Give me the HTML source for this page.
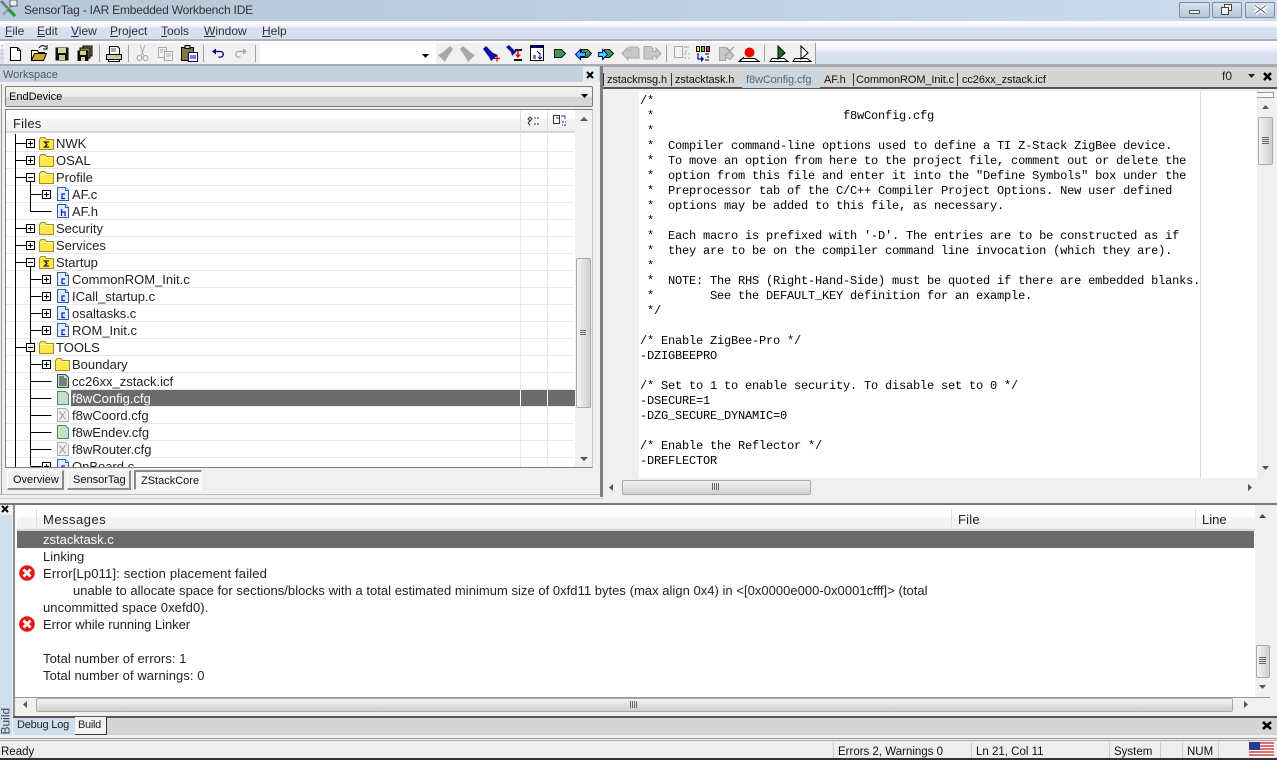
<!DOCTYPE html>
<html><head><meta charset="utf-8"><title>SensorTag - IAR Embedded Workbench IDE</title>
<style>
html,body{margin:0;padding:0;width:1277px;height:760px;overflow:hidden;background:#f0f0f0;font-family:"Liberation Sans",sans-serif;font-size:13px;color:#000}
div,span,svg{position:absolute;box-sizing:border-box}
u{text-decoration:underline}
.t{white-space:pre;line-height:17px}
.m{position:absolute;top:23px;color:#333;font-size:12px;line-height:16px;white-space:pre}
.ln{left:0;width:620px;height:15px;line-height:15px;font-family:"Liberation Mono",monospace;font-size:12px;letter-spacing:-.2px;white-space:pre}
.btn{background:linear-gradient(#f2f2f2,#d8d8d8);border:1px solid #aaa;border-radius:2px}
.r{position:absolute;left:0;height:1px;background:#e8e8e8;width:568px}
.tb{position:absolute;height:17px;line-height:17px;white-space:pre;font-size:11px;color:#111}
.tab{position:absolute;height:20px;top:72px;font-size:11px;letter-spacing:-.1px;line-height:16px;white-space:pre;color:#111}
.sb{position:absolute;top:745px;font-size:11.500px;line-height:14px;color:#111;white-space:pre}
.sp{position:absolute;top:742px;height:16px;width:1px;background:#cfcbc8}
.wt{position:absolute;top:470px;height:20px;background:#f0f0f0;border:1px solid #fff;border-right:2px solid #8a8a8a;border-bottom:2px solid #8a8a8a}
</style></head>
<body>
<svg width="0" height="0" style="left:0;top:0">
<defs>
<symbol id="plus" viewBox="0 0 9 9"><rect x=".5" y=".5" width="8" height="8" fill="#fff" stroke="#000"/><path d="M2 4.500h5M4.500 2v5" stroke="#000"/></symbol>
<symbol id="minus" viewBox="0 0 9 9"><rect x=".5" y=".5" width="8" height="8" fill="#fff" stroke="#000"/><path d="M2 4.500h5" stroke="#000"/></symbol>
<symbol id="folder" viewBox="0 0 15 13"><path d="M.5 12.500V2.500L2 .5h4l1.500 2h7v10z" fill="#ffe84a" stroke="#a98a20"/><path d="M1.500 3.500h12" stroke="#fff8c0"/></symbol>
<symbol id="sfolder" viewBox="0 0 15 13"><path d="M.5 12.500V2.500L2 .5h4l1.500 2h7v10z" fill="#ffe84a" stroke="#a98a20"/><path d="M10 5H5.500L8 7.500 5.500 10H10" fill="none" stroke="#222" stroke-width="1.300"/></symbol>
<symbol id="cfile" viewBox="0 0 12 14"><path d="M.5.5h8l3 3v10H.5z" fill="#dfeefa" stroke="#2d5f9c"/><path d="M8.500.5v3h3" fill="#fff" stroke="#2d5f9c"/><path d="M8 7H5v4.500h3" fill="none" stroke="#1414e0" stroke-width="1.200"/></symbol>
<symbol id="hfile" viewBox="0 0 12 14"><path d="M.5.5h8l3 3v10H.5z" fill="#dfeefa" stroke="#2d5f9c"/><path d="M8.500.5v3h3" fill="#fff" stroke="#2d5f9c"/><path d="M4.500 5v7M4.500 8H8v4" fill="none" stroke="#1414e0" stroke-width="1.200"/></symbol>
<symbol id="tfile" viewBox="0 0 12 14"><path d="M.5.5h8l3 3v10H.5z" fill="#c5e0c8" stroke="#345"/><path d="M2 3h5M2 5h8M2 7h8M2 9h8M2 11h8" stroke="#222"/></symbol>
<symbol id="gfile" viewBox="0 0 12 14"><path d="M.5.5h8l3 3v10H.5z" fill="#c4e0c6" stroke="#4b8a68"/></symbol>
<symbol id="xfile" viewBox="0 0 12 14"><path d="M.5.5h8l3 3v10H.5z" fill="#f2f2f2" stroke="#aaa"/><path d="M2.500 3.500l6 8M8.500 3.500l-6 8" stroke="#aaa" stroke-width="1.300"/></symbol>
<symbol id="err" viewBox="0 0 16 16"><circle cx="8" cy="8" r="7.800" fill="#e01818"/><path d="M4.500 4.500l7 7M11.500 4.500l-7 7" stroke="#fff" stroke-width="2.800"/></symbol>
</defs>
</svg>

<!-- Title bar -->
<div style="left:0;top:0;width:1277px;height:21px;background:linear-gradient(90deg,#b6c8d9 0,#bccddd 40%,#cddded 100%)"></div>
<svg style="left:0;top:0" width="18" height="18" viewBox="0 0 18 18"><path d="M1 1l14 15" stroke="#707880" stroke-width="2.500"/><path d="M15 2L3 15" stroke="#9aa2a8" stroke-width="2.500"/><path d="M8 9l7 7" stroke="#1a9a2a" stroke-width="3"/><rect x="10" y="0" width="7" height="6" fill="#e8f0f4" stroke="#333" stroke-width=".7"/></svg>
<div class="t" style="left:24px;top:1px;line-height:18px;font-size:12px;letter-spacing:-.2px;color:#333">SensorTag - IAR Embedded Workbench IDE</div>
<!-- window buttons -->
<div style="left:1179px;top:2px;width:31px;height:16px;border:1px solid #7d8c9b;border-radius:2px;background:linear-gradient(#d8e4ef,#b8c8d8)"></div>
<div style="left:1189px;top:10px;width:11px;height:4px;border:1px solid #555;background:#eef2f6;border-radius:1px"></div>
<div style="left:1212px;top:2px;width:30px;height:16px;border:1px solid #7d8c9b;border-radius:2px;background:linear-gradient(#d8e4ef,#b8c8d8)"></div>
<svg style="left:1220px;top:4px" width="14" height="12"><rect x="4.500" y=".5" width="7" height="6" fill="#eef2f6" stroke="#444"/><rect x="1.500" y="3.500" width="7" height="7" fill="#eef2f6" stroke="#444"/></svg>
<div style="left:1245px;top:2px;width:30px;height:16px;border:1px solid #7d8c9b;border-radius:2px;background:linear-gradient(#d8e4ef,#b8c8d8)"></div>
<svg style="left:1253px;top:4px" width="15" height="12"><path d="M2 1.500l11 8M13 1.500l-11 8" stroke="#fff" stroke-width="4"/><path d="M2 1.500l11 8M13 1.500l-11 8" stroke="#5a6672" stroke-width="1"/></svg>

<!-- Menu bar -->
<div style="left:0;top:21px;width:1277px;height:19px;background:linear-gradient(#fff 0,#f4f6fb 25%,#d8dff0 40%,#d6def0 100%)"></div>
<div style="left:0;top:39px;width:1277px;height:2px;background:#aeb1b8"></div>
<span class="m" style="left:5px"><u>F</u>ile</span>
<span class="m" style="left:37px"><u>E</u>dit</span>
<span class="m" style="left:71px"><u>V</u>iew</span>
<span class="m" style="left:110px"><u>P</u>roject</span>
<span class="m" style="left:161px"><u>T</u>ools</span>
<span class="m" style="left:204px"><u>W</u>indow</span>
<span class="m" style="left:262px"><u>H</u>elp</span>

<!-- Toolbar -->
<div style="left:0;top:41px;width:1277px;height:24px;background:linear-gradient(#fff 0,#f4f6fb 30%,#d8dff0 50%,#d6def0 100%)"></div>
<div style="left:4px;top:43px;width:811px;height:22px;background:#f0f0f0"></div>
<div style="left:0;top:64px;width:1277px;height:2px;background:#a9adb3"></div>
<svg style="left:0;top:41px" width="830" height="24" viewBox="0 0 830 24">
<g fill="#c8ccd4"><rect x="1" y="4" width="2" height="2"/><rect x="1" y="8" width="2" height="2"/><rect x="1" y="12" width="2" height="2"/><rect x="1" y="16" width="2" height="2"/></g>
<g stroke="#a0a0a0"><path d="M99.500 4v17M128.500 4v17M203.500 4v17M255.500 4v17M666.500 4v17M764.500 4v17M815.500 2v21"/></g>
<!-- new -->
<path d="M10.500 6.500h7l3 3v10h-10z" fill="#fff" stroke="#000"/><path d="M17.500 6.500v3h3" fill="none" stroke="#000"/>
<!-- open -->
<path d="M31.500 19.500V9.500h6l1 2h6v2" fill="#fffbe0" stroke="#000"/><path d="M31.500 19.500l3-7h12l-3 7z" fill="#c9a92e" stroke="#000"/><path d="M39 7c2-3 5-3 7-1" fill="none" stroke="#000"/><path d="M47 4v4h-4" fill="none" stroke="#000"/>
<!-- save -->
<rect x="55.500" y="6.500" width="13" height="13" fill="#111"/><rect x="58" y="7" width="8" height="5" fill="#d8d4a0"/><rect x="59" y="14" width="6" height="5" fill="#c8c8a0"/>
<!-- save all -->
<rect x="83" y="5" width="9" height="10" fill="#808050" stroke="#000"/><rect x="80" y="7" width="10" height="10" fill="#908850" stroke="#000"/><rect x="77.500" y="9.500" width="11" height="10.500" fill="#111"/><rect x="80" y="10" width="6" height="4" fill="#cfcf90"/><rect x="81" y="16" width="4" height="4" fill="#cfcf90"/>
<!-- print -->
<path d="M109.500 5.500h8l2 2v6h-10z" fill="#fff" stroke="#000"/><path d="M106.500 13.500h15v5h-15z" fill="#c8c8c8" stroke="#000"/><path d="M108.500 18.500h11v2h-11z" fill="#fff" stroke="#000"/><path d="M115 15h4" stroke="#d8c020" stroke-width="2"/><path d="M111 8h5M111 10h5" stroke="#555"/>
<!-- cut -->
<path d="M140 4l3.500 10M145 4l-3.500 10" stroke="#a8a8a8" fill="none"/><circle cx="139.500" cy="17" r="2.500" fill="none" stroke="#a0a0a0"/><circle cx="145.500" cy="17" r="2.500" fill="none" stroke="#a0a0a0"/>
<!-- copy -->
<rect x="158.500" y="6.500" width="8" height="10" fill="#f4f4f4" stroke="#a8a8a8"/><rect x="164.500" y="10.500" width="8" height="9" fill="#f4f4f4" stroke="#a8a8a8"/><path d="M160 9h5M160 11h3M166 13h5M166 15h5" stroke="#aaa"/>
<!-- paste -->
<rect x="181.500" y="6.500" width="12" height="13" fill="#807848" stroke="#000"/><rect x="185" y="4.500" width="5" height="3" fill="#c8c8c8" stroke="#000"/><rect x="188.500" y="11.500" width="9" height="9" fill="#fff" stroke="#000080"/><path d="M190 15h6M190 17h6" stroke="#000080"/>
<!-- undo/redo -->
<path d="M215 10.500h5.500a2.800 2.800 0 0 1 0 5.600h-2" fill="none" stroke="#000080" stroke-width="1.300"/><path d="M212 10.500l4-3v6z" fill="#000080"/>
<path d="M244 10.500h-5.500a2.800 2.800 0 0 0 0 5.600h2" fill="none" stroke="#a8a8a8" stroke-width="1.300"/><path d="M247 10.500l-4-3v6z" fill="#a8a8a8"/>
<!-- combo -->
<rect x="260" y="3" width="176" height="20" fill="#fff"/>
<path d="M422 13h7l-3.500 4z" fill="#000"/>
<!-- flashlights -->
<path d="M453 8l-3-3-8 7-4 2 7 7 2-4z" fill="#a8a8a8"/>
<path d="M460 8l3-3 8 7 4 2-7 7-2-4z" fill="#a8a8a8"/>
<path d="M483 8l3-3 7 7 5 2-7 6-2-4z" fill="#0f0fa8"/><path d="M494 17.500h6M497 14.500v6" stroke="#c00" stroke-width="1.200"/>
<path d="M506 6l3-2 5 5 3 1-5 5-1-4z" fill="#0f0fa8"/><path d="M515 9h7M514 19h8" stroke="#111" stroke-width="2"/><path d="M518 10v4" stroke="#e00" stroke-width="1.500"/><path d="M515 13.500h6l-3 3.500z" fill="#e00"/>
<!-- doc-->
<rect x="530.500" y="4.500" width="13" height="15" fill="#fff" stroke="#000"/><rect x="531" y="5" width="12" height="2" fill="#000080"/><path d="M533 15h3M533 17h3M537 10l3 3" stroke="#000"/><path d="M540 12v6M538 16l2 2 2-2" stroke="#0000d0" fill="none"/>
<!-- bookmarks -->
<path d="M554.500 8.500h7l4 4-4 4h-7z" fill="#3a9a50" stroke="#111"/>
<path d="M581.500 8.500h6l4 4-4 4h-6z" fill="#3a9a50" stroke="#111"/><path d="M575.500 13.500l5-5v3h5v4h-5v3z" fill="#30b8ff" stroke="#00008a"/>
<path d="M604.500 8.500h5l4 4-4 4h-5z" fill="#3a9a50" stroke="#111"/><path d="M598.500 11.500h4v-3l5 5-5 5v-3h-4z" fill="#30e0ff" stroke="#00008a"/>
<path d="M622 12.500l6-6v3h2V6h7l2 2v9h-9v-1h-2v3z" fill="#c8c8c8" stroke="#a8a8a8"/>
<path d="M644 5.500h7l2 2v3h3V7l5 5.500-5 5.500v-3h-3v3h-9z" fill="#c8c8c8" stroke="#a8a8a8"/>
<!-- disassembly -->
<rect x="674.500" y="5.500" width="8" height="11" fill="#f4f4f4" stroke="#a8a8a8"/><path d="M684 6h5M686 9v3M684 13h2M688 13h2M684 17h2M688 17h2" stroke="#a8a8a8"/>
<rect x="696.500" y="5.500" width="3" height="5" fill="#e8e820" stroke="#000"/><rect x="701.500" y="5.500" width="3" height="5" fill="#40e040" stroke="#000"/><rect x="706.500" y="5.500" width="3" height="5" fill="#e020c0" stroke="#000"/><path d="M698 12v6h3" fill="none" stroke="#0000c0" stroke-width="1.200"/><path d="M701 15v6l3-3z" fill="#0000c0"/><path d="M705 13h4M707 16h2M705 19h4" stroke="#000"/>
<path d="M719.500 6.500h6l8 8-3 4-5-2v3h-6z" fill="#c8c8c8" stroke="#a8a8a8"/><path d="M726 6l8 9M734 6l-9 9" stroke="#a8a8a8" stroke-width="1.500"/>
<!-- red dot -->
<path d="M742 17.500h13l4 3h-20z" fill="#fff" stroke="#000"/><circle cx="749.500" cy="11.500" r="5" fill="#ee0000"/><path d="M744 16l-4 4" stroke="#000"/>
<!-- run -->
<path d="M772 17.500h12l4 3h-18z" fill="#fff" stroke="#000"/><path d="M778 5v13l7-6z" fill="#107a1a" stroke="#000"/>
<path d="M795 17.500h12l4 3h-18z" fill="#fff" stroke="#000"/><path d="M801 5v13l7-6z" fill="#fff" stroke="#000"/>
</svg>

<!-- Workspace pane -->
<div style="left:0;top:84px;width:602px;height:416px;background:#f0f0f0"></div>
<div style="left:0;top:66px;width:600px;height:16px;background:#c3d2e0"></div>
<div style="left:0;top:82px;width:600px;height:2px;background:#f0f0f0"></div>
<div class="t" style="left:3px;top:67px;font-size:11px;color:#555">Workspace</div>
<div style="left:583px;top:67px;width:16px;height:15px;background:#e6ebef"></div>
<svg style="left:586px;top:71px" width="9" height="8"><path d="M1 1l6 6M7 1l-6 6" stroke="#000" stroke-width="2"/></svg>
<div style="left:5px;top:86px;width:588px;height:21px;border:1px solid #7c7c7c;border-radius:2px;background:linear-gradient(#f4f4f4 0,#ededed 50%,#d4d4d4 55%,#d8d8d8 100%)"></div>
<div class="t" style="left:9px;top:89px;font-size:11px">EndDevice</div>
<svg style="left:580px;top:93px" width="10" height="7"><path d="M1 1h7l-3.500 4z" fill="#000"/></svg>

<div style="left:5px;top:109px;width:588px;height:359px;border:1px solid #7f7f7f;border-right-color:#c8c8c8;background:#fff"></div>
<div style="left:6px;top:110px;width:569px;height:23px;background:linear-gradient(#fff 0,#fff 40%,#f3f4f6 45%,#f0f1f3 100%);border-bottom:2px solid #d6d6d6"></div>
<div class="t" style="left:13px;top:115px;font-size:13px;letter-spacing:.2px;color:#222">Files</div>
<div style="left:520px;top:111px;width:1px;height:21px;background:#ddd"></div>
<div style="left:547px;top:111px;width:1px;height:21px;background:#ddd"></div>
<svg style="left:525px;top:114px" width="16" height="14"><path d="M3 5l2-2 2 2-2 2zM3 9l2 2M3 9l2-2" fill="none" stroke="#333"/><path d="M9 4h5M9 10h5" stroke="#333" stroke-dasharray="2 1"/></svg>
<svg style="left:552px;top:114px" width="16" height="14"><rect x="1.500" y="1.500" width="6" height="8" fill="#fff" stroke="#333"/><path d="M4 4h4v0M9 2h4v3" fill="none" stroke="#1c3cb0"/><path d="M10 8h2M13 8h1M10 11h1M12 11h2" stroke="#333"/></svg>

<!-- Tree -->
<div style="left:6px;top:134px;width:569px;height:333px;overflow:hidden;background:#fff">
<div class="r" style="top:17px"></div><div class="r" style="top:34px"></div><div class="r" style="top:51px"></div><div class="r" style="top:68px"></div><div class="r" style="top:85px"></div><div class="r" style="top:102px"></div><div class="r" style="top:119px"></div><div class="r" style="top:136px"></div><div class="r" style="top:153px"></div><div class="r" style="top:170px"></div><div class="r" style="top:187px"></div><div class="r" style="top:204px"></div><div class="r" style="top:221px"></div><div class="r" style="top:238px"></div><div class="r" style="top:255px"></div><div class="r" style="top:272px"></div><div class="r" style="top:289px"></div><div class="r" style="top:306px"></div><div class="r" style="top:323px"></div>
<div style="left:514px;top:0;width:1px;height:333px;background:#e8e8e8"></div>
<div style="left:541px;top:0;width:1px;height:333px;background:#e8e8e8"></div>
<div style="left:65px;top:256px;width:504px;height:16px;background:#6b6b6b"></div>
<div style="left:514px;top:256px;width:1px;height:16px;background:#fff"></div>
<div style="left:541px;top:256px;width:1px;height:16px;background:#fff"></div>
<svg style="left:0;top:0" width="66" height="333" viewBox="6 134 66 333">
<path d="M15.500 134v333M15 143.500h11M15 160.500h11M15 177.500h11M15 228.500h11M15 245.500h11M15 262.500h11M15 347.500h11" stroke="#000" fill="none"/>
<path d="M30.500 181v30.500h21M30.500 194.500h11M30.500 266v200M30.500 279.500h11M30.500 296.500h11M30.500 313.500h11M30.500 330.500h11M30.500 364.500h11M30.500 381.500h21M30.500 398.500h21M30.500 415.500h21M30.500 432.500h21M30.500 449.500h21M30.500 466.500h11" stroke="#000" fill="none"/>
<use href="#plus" x="26" y="139" width="9" height="9"/><use href="#sfolder" x="39" y="137" width="15" height="13"/>
<use href="#plus" x="26" y="156" width="9" height="9"/><use href="#folder" x="39" y="154" width="15" height="13"/>
<use href="#minus" x="26" y="173" width="9" height="9"/><use href="#folder" x="39" y="171" width="15" height="13"/>
<use href="#plus" x="42" y="190" width="9" height="9"/><use href="#cfile" x="57" y="187" width="12" height="14"/>
<use href="#hfile" x="57" y="204" width="12" height="14"/>
<use href="#plus" x="26" y="224" width="9" height="9"/><use href="#folder" x="39" y="222" width="15" height="13"/>
<use href="#plus" x="26" y="241" width="9" height="9"/><use href="#folder" x="39" y="239" width="15" height="13"/>
<use href="#minus" x="26" y="258" width="9" height="9"/><use href="#sfolder" x="39" y="256" width="15" height="13"/>
<use href="#plus" x="42" y="275" width="9" height="9"/><use href="#cfile" x="57" y="272" width="12" height="14"/>
<use href="#plus" x="42" y="292" width="9" height="9"/><use href="#cfile" x="57" y="289" width="12" height="14"/>
<use href="#plus" x="42" y="309" width="9" height="9"/><use href="#cfile" x="57" y="306" width="12" height="14"/>
<use href="#plus" x="42" y="326" width="9" height="9"/><use href="#cfile" x="57" y="323" width="12" height="14"/>
<use href="#minus" x="26" y="343" width="9" height="9"/><use href="#folder" x="39" y="341" width="15" height="13"/>
<use href="#plus" x="42" y="360" width="9" height="9"/><use href="#folder" x="55" y="358" width="15" height="13"/>
<use href="#tfile" x="57" y="374" width="12" height="14"/>
<use href="#gfile" x="57" y="391" width="12" height="14"/>
<use href="#xfile" x="57" y="408" width="12" height="14"/>
<use href="#gfile" x="57" y="425" width="12" height="14"/>
<use href="#xfile" x="57" y="442" width="12" height="14"/>
<use href="#plus" x="42" y="462" width="9" height="9"/><use href="#cfile" x="57" y="459" width="12" height="14"/>
</svg>
<div class="t" style="left:50px;top:1px;color:#222">NWK</div>
<div class="t" style="left:50px;top:18px;color:#222">OSAL</div>
<div class="t" style="left:50px;top:35px;color:#222">Profile</div>
<div class="t" style="left:66px;top:52px;color:#222">AF.c</div>
<div class="t" style="left:66px;top:69px;color:#222">AF.h</div>
<div class="t" style="left:50px;top:86px;color:#222">Security</div>
<div class="t" style="left:50px;top:103px;color:#222">Services</div>
<div class="t" style="left:50px;top:120px;color:#222">Startup</div>
<div class="t" style="left:66px;top:137px;color:#222">CommonROM_Init.c</div>
<div class="t" style="left:66px;top:154px;color:#222">ICall_startup.c</div>
<div class="t" style="left:66px;top:171px;color:#222">osaltasks.c</div>
<div class="t" style="left:66px;top:188px;color:#222">ROM_Init.c</div>
<div class="t" style="left:50px;top:205px;color:#222">TOOLS</div>
<div class="t" style="left:66px;top:222px;color:#222">Boundary</div>
<div class="t" style="left:66px;top:239px;color:#222">cc26xx_zstack.icf</div>
<div class="t" style="left:66px;top:256px;color:#fff">f8wConfig.cfg</div>
<div class="t" style="left:66px;top:273px;color:#222">f8wCoord.cfg</div>
<div class="t" style="left:66px;top:290px;color:#222">f8wEndev.cfg</div>
<div class="t" style="left:66px;top:307px;color:#222">f8wRouter.cfg</div>
<div class="t" style="left:66px;top:324px;color:#222">OnBoard.c</div>
</div>
<!-- ws scrollbar -->
<div style="left:575px;top:110px;width:17px;height:357px;background:#f0f0f0"></div>
<svg style="left:579px;top:116px" width="10" height="6"><path d="M1 5h8L5 1z" fill="#555"/></svg>
<svg style="left:579px;top:456px" width="10" height="6"><path d="M1 1h8L5 5z" fill="#555"/></svg>
<div class="btn" style="left:576px;top:258px;width:15px;height:150px;background:linear-gradient(90deg,#f4f4f4,#cfcfcf)"></div>
<svg style="left:579px;top:329px" width="8" height="7"><path d="M1 1.500h6M1 3.500h6M1 5.500h6" stroke="#666"/></svg>
<!-- ws tabs -->
<div class="wt" style="left:7px;width:57px"></div>
<div class="tb" style="left:13px;top:472px">Overview</div>
<div class="wt" style="left:67px;width:64px"></div>
<div class="tb" style="left:73px;top:472px">SensorTag</div>
<div class="wt" style="left:134px;width:68px;border:2px solid #8a8a8a;border-right:1px solid #fff;border-bottom:1px solid #fff;background:#f8f8f8"></div>
<div class="tb" style="left:141px;top:473px">ZStackCore</div>
<div style="left:1px;top:84px;width:1px;height:410px;background:#999"></div>
<div style="left:0;top:494px;width:602px;height:1px;background:#bbb"></div>

<!-- Splitter -->
<div style="left:600px;top:66px;width:3px;height:431px;background:#7f7f7f"></div>

<!-- Editor tabs -->
<div style="left:603px;top:66px;width:674px;height:22px;background:#d5d5d5;border-top:1px solid #a8a8a8"></div>
<div style="left:603px;top:87px;width:674px;height:2px;background:#555"></div>
<div style="left:603px;top:89px;width:674px;height:408px;background:#f0f0f0"></div>
<div style="left:742px;top:69px;width:78px;height:19px;background:#c9d7e3"></div>
<div style="left:603px;top:73px;width:1px;height:13px;background:#333"></div>
<div style="left:671px;top:73px;width:1px;height:13px;background:#333"></div>
<div style="left:853px;top:73px;width:1px;height:13px;background:#333"></div>
<div style="left:957px;top:73px;width:1px;height:13px;background:#333"></div>
<div class="tab" style="left:607px;">zstackmsg.h</div>
<div class="tab" style="left:675px;">zstacktask.h</div>
<div class="tab" style="left:746px;color:#666">f8wConfig.cfg</div>
<div class="tab" style="left:824px;">AF.h</div>
<div class="tab" style="left:856px;">CommonROM_Init.c</div>
<div class="tab" style="left:962px;">cc26xx_zstack.icf</div>
<div class="t" style="left:1222px;top:68px;font-size:12px;color:#222">f0</div>
<svg style="left:1248px;top:71px" width="28" height="12"><path d="M0 3h7L3.500 7z" fill="#222"/><path d="M16 2l7 7M23 2l-7 7" stroke="#000" stroke-width="2.500"/></svg>

<!-- Editor -->
<div style="left:604px;top:91px;width:653px;height:387px;background:#fff"></div>
<div style="left:604px;top:91px;width:35px;height:387px;background:#f0f0f0"></div>
<div style="left:1200px;top:91px;width:1px;height:387px;background:#dcdcdc"></div>
<div style="left:640px;top:94px;width:617px;height:384px;overflow:hidden">
<div class="ln" style="top:0">/*</div>
<div class="ln" style="top:15px"> *                           f8wConfig.cfg</div>
<div class="ln" style="top:30px"> *</div>
<div class="ln" style="top:45px"> *  Compiler command-line options used to define a TI Z-Stack ZigBee device.</div>
<div class="ln" style="top:60px"> *  To move an option from here to the project file, comment out or delete the</div>
<div class="ln" style="top:75px"> *  option from this file and enter it into the "Define Symbols" box under the</div>
<div class="ln" style="top:90px"> *  Preprocessor tab of the C/C++ Compiler Project Options. New user defined</div>
<div class="ln" style="top:105px"> *  options may be added to this file, as necessary.</div>
<div class="ln" style="top:120px"> *</div>
<div class="ln" style="top:135px"> *  Each macro is prefixed with '-D'. The entries are to be constructed as if</div>
<div class="ln" style="top:150px"> *  they are to be on the compiler command line invocation (which they are).</div>
<div class="ln" style="top:165px"> *</div>
<div class="ln" style="top:180px"> *  NOTE: The RHS (Right-Hand-Side) must be quoted if there are embedded blanks.</div>
<div class="ln" style="top:195px"> *        See the DEFAULT_KEY definition for an example.</div>
<div class="ln" style="top:210px"> */</div>
<div class="ln" style="top:240px">/* Enable ZigBee-Pro */</div>
<div class="ln" style="top:255px">-DZIGBEEPRO</div>
<div class="ln" style="top:285px">/* Set to 1 to enable security. To disable set to 0 */</div>
<div class="ln" style="top:300px">-DSECURE=1</div>
<div class="ln" style="top:315px">-DZG_SECURE_DYNAMIC=0</div>
<div class="ln" style="top:345px">/* Enable the Reflector */</div>
<div class="ln" style="top:360px">-DREFLECTOR</div>
</div>
<!-- editor scrollbars -->
<div style="left:1257px;top:91px;width:17px;height:387px;background:#f0f0f0"></div>
<div style="left:1257px;top:92px;width:17px;height:6px;background:#f8f8f8;border:1px solid #999;border-left:0"></div>
<svg style="left:1261px;top:104px" width="10" height="6"><path d="M1 5h7L4.500 1z" fill="#555"/></svg>
<svg style="left:1261px;top:465px" width="10" height="6"><path d="M1 1h7L4.500 5z" fill="#555"/></svg>
<div class="btn" style="left:1258px;top:117px;width:15px;height:48px;background:linear-gradient(90deg,#f4f4f4,#cfcfcf)"></div>
<svg style="left:1262px;top:136px" width="8" height="9"><path d="M0 1.500h7M0 3.500h7M0 5.500h7M0 7.500h7" stroke="#666"/></svg>
<svg style="left:608px;top:483px" width="7" height="10"><path d="M5 1v7L1 4.500z" fill="#555"/></svg>
<svg style="left:1247px;top:483px" width="7" height="10"><path d="M1 1v7l4-3.500z" fill="#555"/></svg>
<div class="btn" style="left:622px;top:480px;width:189px;height:15px;background:linear-gradient(#f2f2f2,#cfcfcf)"></div>
<svg style="left:711px;top:483px" width="9" height="8"><path d="M1.500 0v7M3.500 0v7M5.500 0v7M7.500 0v7" stroke="#666"/></svg>

<!-- divider -->
<div style="left:0;top:497px;width:1277px;height:6px;background:#f0f0f0"></div>
<div style="left:0;top:498px;width:603px;height:1px;background:#c8c8c8"></div>
<div style="left:0;top:503px;width:1277px;height:2px;background:#777"></div>

<!-- Messages -->
<div style="left:0;top:505px;width:1277px;height:212px;background:#f0f0f0"></div>
<div style="left:0;top:515px;width:12px;height:220px;background:#cfdfed"></div>
<svg style="left:1px;top:505px" width="9" height="8"><path d="M1 1l6 6M7 1l-6 6" stroke="#000" stroke-width="2"/></svg>
<div style="left:13px;top:505px;width:2px;height:212px;background:#8e8e8e"></div>
<div style="left:15px;top:505px;width:1240px;height:192px;background:#fff"></div>
<div style="left:17px;top:507px;width:1238px;height:24px;background:linear-gradient(#fff 0,#fff 40%,#f3f4f6 50%,#f0f1f3 100%);border-bottom:2px solid #d8d8d8"></div>
<div style="left:36px;top:508px;width:1px;height:22px;background:#e0e0e0"></div>
<div style="left:951px;top:508px;width:1px;height:22px;background:#e0e0e0"></div>
<div style="left:1195px;top:508px;width:1px;height:22px;background:#e0e0e0"></div>
<div class="t" style="left:43px;top:511px;letter-spacing:.5px;color:#222">Messages</div>
<div class="t" style="left:958px;top:511px;letter-spacing:.2px;color:#222">File</div>
<div class="t" style="left:1202px;top:511px;color:#222">Line</div>
<div style="left:17px;top:531px;width:1237px;height:17px;background:#6b6b6b"></div>
<div class="t" style="left:43px;top:531px;color:#fff">zstacktask.c</div>
<div class="t" style="left:43px;top:548px;color:#222">Linking</div>
<svg style="left:19px;top:565px" width="16" height="16"><use href="#err" width="16" height="16"/></svg>
<div class="t" style="left:43px;top:565px;letter-spacing:.16px;color:#222">Error[Lp011]: section placement failed</div>
<div class="t" style="left:73px;top:582px;letter-spacing:.027px;color:#222">unable to allocate space for sections/blocks with a total estimated minimum size of 0xfd11 bytes (max align 0x4) in &lt;[0x0000e000-0x0001cfff]&gt; (total</div>
<div class="t" style="left:43px;top:599px;letter-spacing:.08px;color:#222">uncommitted space 0xefd0).</div>
<svg style="left:19px;top:616px" width="16" height="16"><use href="#err" width="16" height="16"/></svg>
<div class="t" style="left:43px;top:616px;letter-spacing:-.04px;color:#222">Error while running Linker</div>
<div class="t" style="left:43px;top:650px;letter-spacing:.08px;color:#222">Total number of errors: 1</div>
<div class="t" style="left:43px;top:667px;letter-spacing:.07px;color:#222">Total number of warnings: 0</div>
<!-- msg scrollbars -->
<div style="left:15px;top:697px;width:1255px;height:1px;background:#9a9a9a"></div>
<svg style="left:1258px;top:513px" width="10" height="6"><path d="M1 5h7L4.500 1z" fill="#444"/></svg>
<svg style="left:1258px;top:684px" width="10" height="6"><path d="M1 1h7L4.500 5z" fill="#555"/></svg>
<div class="btn" style="left:1256px;top:645px;width:14px;height:33px;background:linear-gradient(90deg,#f4f4f4,#cfcfcf)"></div>
<svg style="left:1259px;top:656px" width="8" height="9"><path d="M0 1.500h7M0 3.500h7M0 5.500h7M0 7.500h7" stroke="#666"/></svg>
<svg style="left:22px;top:700px" width="7" height="10"><path d="M5 1v7L1 4.500z" fill="#555"/></svg>
<svg style="left:1243px;top:700px" width="7" height="10"><path d="M1 1v7l4-3.500z" fill="#555"/></svg>
<div class="btn" style="left:36px;top:698px;width:1197px;height:14px;background:linear-gradient(#f2f2f2,#cfcfcf)"></div>
<svg style="left:629px;top:701px" width="9" height="8"><path d="M1.500 0v7M3.500 0v7M5.500 0v7M7.500 0v7" stroke="#666"/></svg>

<!-- Build tabs -->
<div style="left:13px;top:716px;width:1264px;height:19px;background:#d5d5d5;border-top:2px solid #555"></div>
<div style="left:13px;top:718px;width:62px;height:17px;background:#cfdfed"></div>
<div style="left:75px;top:717px;width:32px;height:18px;background:#f4f4f4;border-right:1px solid #333;border-bottom:1px solid #333"></div>
<div class="t" style="left:17px;top:717px;font-size:11px;letter-spacing:-.2px;color:#222">Debug Log</div>
<div class="t" style="left:78px;top:717px;font-size:11px;letter-spacing:-.3px;color:#222">Build</div>
<div class="t" style="left:-11px;top:709px;font-size:12px;color:#445;transform:rotate(-90deg);transform-origin:center;width:34px;height:17px;line-height:17px">Build</div>
<svg style="left:1262px;top:721px" width="11" height="10"><path d="M1 1l8 7M9 1l-8 7" stroke="#000" stroke-width="2.500"/></svg>

<!-- Status bar -->
<div style="left:0;top:735px;width:1277px;height:5px;background:#f0f0f0"></div>
<div style="left:0;top:738px;width:1277px;height:1px;background:#999"></div>
<div style="left:0;top:740px;width:1277px;height:20px;background:#f0edeb;border-top:1px solid #aaa;border-bottom:2px solid #333"></div>
<div class="sb" style="left:1px">Ready</div>
<div class="sp" style="left:833px"></div>
<div class="sb" style="left:838px">Errors 2, Warnings 0</div>
<div class="sp" style="left:971px"></div>
<div class="sb" style="left:976px">Ln 21, Col 11</div>
<div class="sp" style="left:1109px"></div>
<div class="sb" style="left:1114px">System</div>
<div class="sp" style="left:1160px"></div>
<div class="sp" style="left:1182px"></div>
<div class="sb" style="left:1187px">NUM</div>
<div class="sp" style="left:1218px"></div>
<svg style="left:1249px;top:742px" width="25" height="15" viewBox="0 0 25 15"><rect width="25" height="15" fill="#fff"/><path d="M0 1h25M0 4h25M0 7h25M0 10h25M0 13h25" stroke="#d04040" stroke-width="1.500"/><rect width="11" height="8" fill="#2a3a90"/></svg>
</body></html>
